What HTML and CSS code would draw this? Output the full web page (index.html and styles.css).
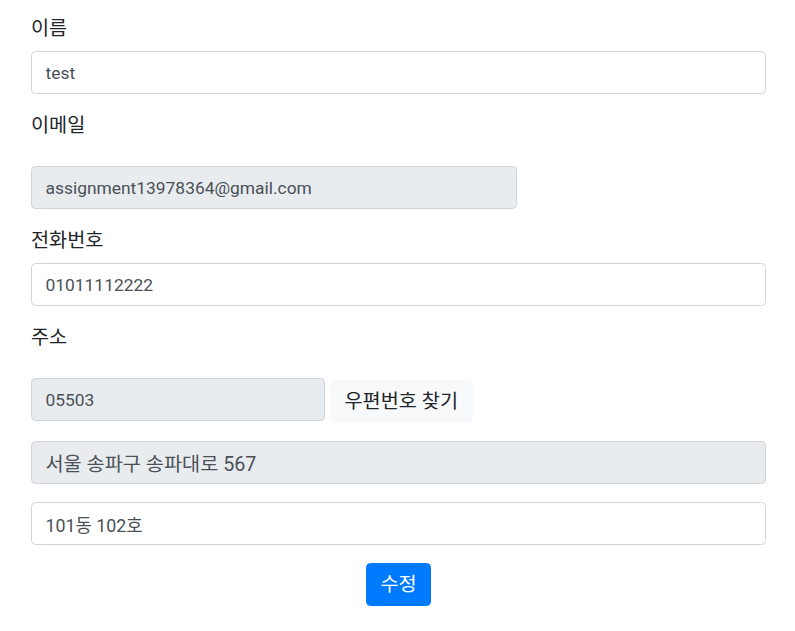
FILE: index.html
```html
<!DOCTYPE html>
<html lang="ko">
<head>
<meta charset="utf-8">
<title>회원정보 수정</title>
<link rel="stylesheet" href="styles.css">
</head>
<body>
<div class="container">
  <form class="form">
    <div class="group">
      <label class="lbl">이름</label>
      <input class="field" type="text" value="test">
    </div>
    <div class="group">
      <label class="lbl lbl-spaced">이메일</label>
      <input class="field field-disabled field-email" type="text" value="assignment13978364@gmail.com" readonly>
    </div>
    <div class="group">
      <label class="lbl">전화번호</label>
      <input class="field" type="text" value="01011112222">
    </div>
    <div class="group">
      <label class="lbl lbl-spaced">주소</label>
      <div class="zip-row">
        <input class="field field-disabled field-zip" type="text" value="05503" readonly>
        <button class="btn btn-light" type="button">우편번호 찾기</button>
      </div>
    </div>
    <div class="group">
      <input class="field field-disabled field-ko" type="text" value="서울 송파구 송파대로 567" readonly>
    </div>
    <div class="group">
      <input class="field field-mixed" type="text" value="101동 102호">
    </div>
    <div class="actions">
      <button class="btn btn-primary" type="submit">수정</button>
    </div>
  </form>
</div>
</body>
</html>
```
FILE: styles.css
```css
html, body {
  margin: 0;
  padding: 0;
  background: #fff;
}
body {
  font-family: Roboto, "Noto Sans CJK KR", sans-serif;
  font-size: 18px;
  line-height: 27px;
  color: #212529;
}
.container {
  width: 735px;
  padding: 15px 0 0 31px;
}
.form {
  display: flex;
  flex-direction: column;
}
.group {
  display: flex;
  flex-direction: column;
  margin-bottom: 18px;
}
.lbl {
  display: block;
  margin-bottom: 9px;
  font-size: 19.7px;
  line-height: 27px;
}
.lbl-spaced {
  margin-bottom: 27px;
}
.field {
  box-sizing: border-box;
  width: 100%;
  height: 43px;
  margin: 0;
  padding: 6px 13.5px;
  font-family: inherit;
  font-size: 17.4px;
  line-height: 27px;
  color: #495057;
  background: #fff;
  border: 1px solid #ced4da;
  border-radius: 4.5px;
  outline: none;
}
.field-ko {
  font-size: 19.7px;
}
.field-mixed {
  font-size: 17.8px;
}
.field-disabled {
  background: #e9ecef;
}
.field-email {
  width: 486px;
}
.zip-row {
  display: flex;
  align-items: flex-start;
  gap: 5px;
}
.field-zip {
  width: 294px;
  flex: none;
}
.btn {
  box-sizing: border-box;
  height: 43px;
  padding: 6px 13.5px;
  font-family: inherit;
  font-size: 19.7px;
  line-height: 27px;
  border: 1px solid transparent;
  border-radius: 4.5px;
  cursor: pointer;
}
.btn-light {
  margin-top: 2px;
  background: #f8f9fa;
  border-color: #f8f9fa;
  color: #212529;
}
.btn-primary {
  background: #007bff;
  border-color: #007bff;
  color: #fff;
}
.actions {
  display: flex;
  justify-content: center;
}
```
